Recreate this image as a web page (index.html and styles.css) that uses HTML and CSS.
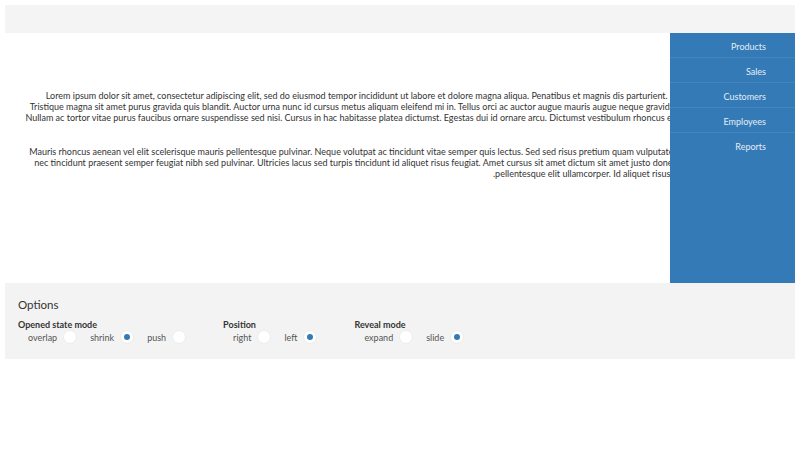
FILE: index.html
```html
<!DOCTYPE html>
<html lang="en">
<head>
    <meta charset="UTF-8">
    <meta name="viewport" content="width=device-width, initial-scale=1.0">
    <title>Drawer</title>
    <link rel="stylesheet" href="styles.css">
</head>
<body>
    <div class="toolbar"></div>

    <div class="drawer">
        <div class="content">
            <p>Lorem ipsum dolor sit amet, consectetur adipiscing elit, sed do eiusmod tempor incididunt ut labore et dolore magna aliqua. Penatibus et magnis dis parturient. Eget dolor morbi non arcu risus. Tristique magna sit amet purus gravida quis blandit. Auctor urna nunc id cursus metus aliquam eleifend mi in. Tellus orci ac auctor augue mauris augue neque gravida. Nullam vehicula ipsum a arcu. Nullam ac tortor vitae purus faucibus ornare suspendisse sed nisi. Cursus in hac habitasse platea dictumst. Egestas dui id ornare arcu. Dictumst vestibulum rhoncus est pellentesque elit ullamcorper dignissim.</p>
            <p>Mauris rhoncus aenean vel elit scelerisque mauris pellentesque pulvinar. Neque volutpat ac tincidunt vitae semper quis lectus. Sed sed risus pretium quam vulputate dignissim suspendisse in. Urna nec tincidunt praesent semper feugiat nibh sed pulvinar. Ultricies lacus sed turpis tincidunt id aliquet risus feugiat. Amet cursus sit amet dictum sit amet justo donec enim. Vestibulum rhoncus est pellentesque elit ullamcorper. Id aliquet risus feugiat in ante metus dictum at.</p>
        </div>

        <ul class="panel">
            <li>Products</li>
            <li>Sales</li>
            <li>Customers</li>
            <li>Employees</li>
            <li>Reports</li>
        </ul>
    </div>

    <div class="options">
        <div class="caption">Options</div>
        <div class="option-row">
            <div class="option">
                <div class="option-label">Opened state mode</div>
                <div class="radio-group">
                    <div class="radio">overlap <span class="circle"></span></div>
                    <div class="radio">shrink <span class="circle checked"></span></div>
                    <div class="radio">push <span class="circle"></span></div>
                </div>
            </div>
            <div class="option">
                <div class="option-label">Position</div>
                <div class="radio-group">
                    <div class="radio">right <span class="circle"></span></div>
                    <div class="radio">left <span class="circle checked"></span></div>
                </div>
            </div>
            <div class="option">
                <div class="option-label">Reveal mode</div>
                <div class="radio-group">
                    <div class="radio">expand <span class="circle"></span></div>
                    <div class="radio">slide <span class="circle checked"></span></div>
                </div>
            </div>
        </div>
    </div>
</body>
</html>
```
FILE: styles.css
```css
body {
    font-family: 'Segoe UI', Lato, 'Open Sans', sans-serif;
    color: #333;
    margin: 5px;
    background: #fff;
}
.toolbar {
    height: 28px;
    background: #f4f4f4;
}
.drawer {
    display: flex;
    height: 250px;
}
.content {
    flex: 1;
    overflow: hidden;
    padding: 57px 0 0 20px;
    font-size: 9px;
    line-height: 11px;
}
.content p {
    direction: rtl;
    width: 770px;
    margin: 0 0 12px;
}
.panel {
    width: 125px;
    margin: 0;
    padding: 0;
    list-style: none;
    background: #337ab7;
}
.panel li {
    height: 24px;
    line-height: 27px;
    padding-right: 29px;
    text-align: right;
    font-size: 9px;
    color: #e4edf6;
    border-bottom: 1px solid #4585be;
}
.panel li:last-child {
    border-bottom: none;
}
.options {
    background: #f3f3f3;
    padding: 14px 13px 15px;
}
.caption {
    font-size: 11.5px;
    line-height: 16px;
    margin-bottom: 6px;
}
.option-row {
    display: flex;
    gap: 37px;
}
.option-label {
    font-size: 9px;
    font-weight: bold;
    line-height: 11px;
}
.radio-group {
    display: flex;
    gap: 13px;
    padding-left: 10px;
}
.radio {
    display: flex;
    align-items: center;
    gap: 6px;
    font-size: 9px;
    color: #555;
}
.circle {
    width: 12px;
    height: 12px;
    border-radius: 50%;
    background: #fff;
    border: 1px solid #ececec;
    position: relative;
}
.circle.checked::after {
    content: '';
    position: absolute;
    left: 3px;
    top: 3px;
    width: 6px;
    height: 6px;
    border-radius: 50%;
    background: #337ab7;
}
```
